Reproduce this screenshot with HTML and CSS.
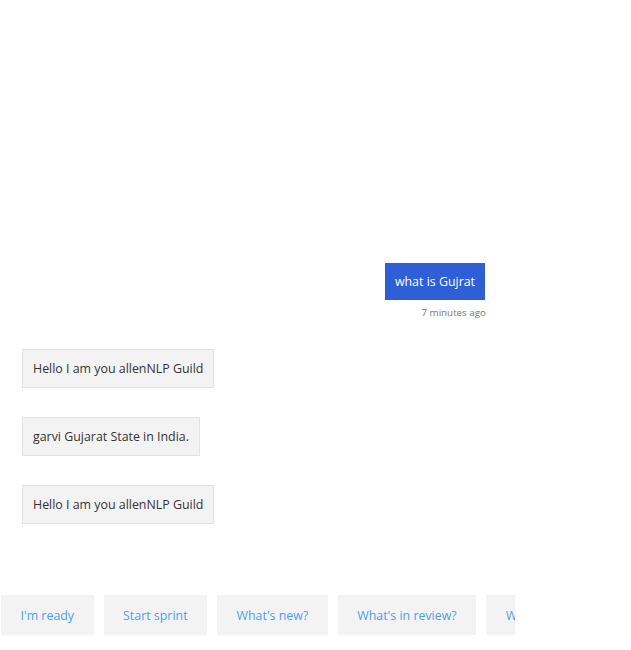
FILE: index.html
```html
<!DOCTYPE html>
<html lang="en">
<head>
  <meta charset="UTF-8">
  <meta name="viewport" content="width=device-width, initial-scale=1">
  <title>Chat</title>
  <link rel="stylesheet" href="styles.css">
</head>
<body>
  <div class="chat">
    <div class="history">
      <div class="message user">
        <div class="bubble">what is Gujrat</div>
        <div class="timestamp">7 minutes ago</div>
      </div>
      <div class="message bot">
        <div class="bubble">Hello I am you allenNLP Guild</div>
      </div>
      <div class="message bot">
        <div class="bubble">garvi Gujarat State in India.</div>
      </div>
      <div class="message bot">
        <div class="bubble">Hello I am you allenNLP Guild</div>
      </div>
    </div>
    <div class="suggested">
      <button class="action">I'm ready</button>
      <button class="action">Start sprint</button>
      <button class="action">What's new?</button>
      <button class="action">What's in review?</button>
      <button class="action">What's done?</button>
    </div>
  </div>
</body>
</html>
```

FILE: styles.css
```css
* {
  box-sizing: border-box;
}

body {
  margin: 0;
  background: #fff;
  font-family: "Open Sans", "Noto Sans", sans-serif;
  font-size: 12.4px;
  color: #333;
}

.chat {
  width: 515px;
  height: 650px;
  overflow: hidden;
}

.history {
  padding: 263px 30px 0 22px;
  display: flex;
  flex-direction: column;
}

.message {
  display: flex;
  flex-direction: column;
  margin-bottom: 29px;
}

.message.user {
  align-items: flex-end;
}

.message.bot {
  align-items: flex-start;
}

.bubble {
  line-height: 17px;
  white-space: nowrap;
}

.user .bubble {
  background: #2f5fd7;
  color: #fff;
  height: 37px;
  padding: 10px 10px;
}

.bot .bubble {
  background: #f3f3f3;
  border: 1px solid #e3e3e3;
  height: 39px;
  padding: 10px 10px;
}

.timestamp {
  margin-top: 6px;
  font-size: 9.8px;
  line-height: 14px;
  color: #767676;
  margin-right: -1px;
}

.suggested {
  display: flex;
  gap: 10px;
  padding: 0 0 0 1px;
  margin-top: 42px;
  overflow: hidden;
}

.action {
  flex: none;
  height: 40px;
  border: 0;
  background: #f3f3f3;
  color: #4a9ff5;
  font-family: inherit;
  font-size: 12.4px;
  padding: 0 19.5px;
  cursor: pointer;
}
```
